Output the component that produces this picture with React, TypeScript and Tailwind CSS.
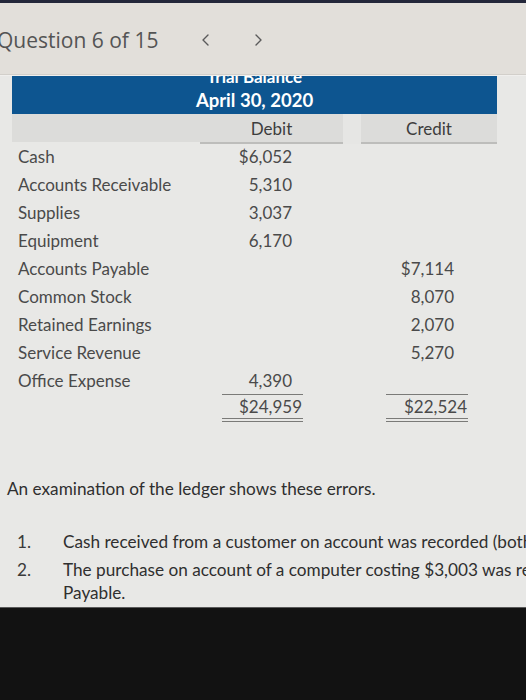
import React from "react";

const rows: [string, string, string][] = [
  ["Cash", "$6,052", ""],
  ["Accounts Receivable", "5,310", ""],
  ["Supplies", "3,037", ""],
  ["Equipment", "6,170", ""],
  ["Accounts Payable", "", "$7,114"],
  ["Common Stock", "", "8,070"],
  ["Retained Earnings", "", "2,070"],
  ["Service Revenue", "", "5,270"],
  ["Office Expense", "4,390", ""],
];

function Chevron({ dir }: { dir: "l" | "r" }) {
  return (
    <svg width="12" height="16" viewBox="0 0 12 16" fill="none" stroke="#5a5a5a" strokeWidth="1.4" strokeLinecap="round" strokeLinejoin="round">
      {dir === "l" ? <path d="M8 3 L3 8 L8 13" /> : <path d="M4 3 L9 8 L4 13" />}
    </svg>
  );
}

export default function App() {
  return (
    <div className="w-[526px] h-[700px] overflow-hidden flex flex-col bg-[#e8e8e6]" style={{ fontFamily: "Lato, 'Open Sans', sans-serif" }}>
      <div className="h-[3px] bg-[#23273a]" />
      <div className="h-[72px] bg-[#e2dfda] flex items-start pt-[23px] border-b border-[#d2cfca]">
        <span className="ml-[-3px] text-[21px] leading-[28px] text-[#545454]" style={{ fontFamily: "'Open Sans', sans-serif" }}>
          Question 6 of 15
        </span>
        <div className="ml-[42px] mt-[6px] flex gap-[40px]">
          <Chevron dir="l" />
          <Chevron dir="r" />
        </div>
      </div>
      <div className="h-[1px] bg-[#f0efed]" />
      <div className="mx-[12px] w-[485px]">
        <div className="h-[38px] bg-[#0d5590] flex flex-col items-center overflow-hidden">
          <div className="mt-[-9px] h-[20px] leading-[20px] text-[17px] font-bold text-white">Trial Balance</div>
          <div className="mt-[2px] leading-[22px] text-[18.5px] font-bold text-white">April 30, 2020</div>
        </div>
        <div className="grid grid-cols-[188px_143px_18px_136px] h-[28px] bg-[#dcdcda] text-[17px] text-[#3d3d3d]">
          <div />
          <div className="flex items-center justify-center border-b-2 border-[#bdbdbb] pt-[2px]">Debit</div>
          <div className="bg-[#e6e6e4]" />
          <div className="flex items-center justify-center border-b-2 border-[#bdbdbb] pt-[2px]">Credit</div>
        </div>
        {rows.map(([label, d, c]) => (
          <div key={label} className="grid grid-cols-[188px_143px_18px_136px] h-[28px] items-center text-[17px] text-[#4a4a4a] pt-[1px]">
            <div className="pl-[6px]">{label}</div>
            <div className="text-right pr-[51px]">{d}</div>
            <div />
            <div className="text-right pr-[43px]">{c}</div>
          </div>
        ))}
        <div className="grid grid-cols-[188px_143px_18px_136px] text-[17px] text-[#4a4a4a]">
          <div />
          <div className="pl-[22px]">
            <div className="w-[81px] h-[28px] border-t border-b-4 border-[#7a7a78] flex items-center justify-end pr-[1px]" style={{ borderBottomStyle: "double" }}>
              $24,959
            </div>
          </div>
          <div />
          <div className="pl-[25px]">
            <div className="w-[82px] h-[28px] border-t border-b-4 border-[#7a7a78] flex items-center justify-end pr-[1px]" style={{ borderBottomStyle: "double" }}>
              $22,524
            </div>
          </div>
        </div>
      </div>
      <div className="mt-[56px] ml-[7px] text-[17.2px] leading-[22px] text-[#2f2f2f] whitespace-nowrap">
        An examination of the ledger shows these errors.
      </div>
      <div className="mt-[30px] text-[17.2px] leading-[23px] text-[#2f2f2f] whitespace-nowrap">
        <div className="flex mb-[5px]">
          <span className="w-[63px] pl-[17px] shrink-0 text-[#3a3a3a]">1.</span>
          <span>Cash received from a customer on account was recorded (both debit and credit) as $1,110 instead of $1,400.</span>
        </div>
        <div className="flex">
          <span className="w-[63px] pl-[17px] shrink-0 text-[#3a3a3a]">2.</span>
          <span>
            The purchase on account of a computer costing $3,003 was recorded as a debit to Office Expense and a credit to Accounts
            <br />
            Payable.
          </span>
        </div>
      </div>
      <div className="mt-[3px] h-[1px] bg-[#5a5a5a]" />
      <div className="flex-1 bg-[#121212]" />
    </div>
  );
}
